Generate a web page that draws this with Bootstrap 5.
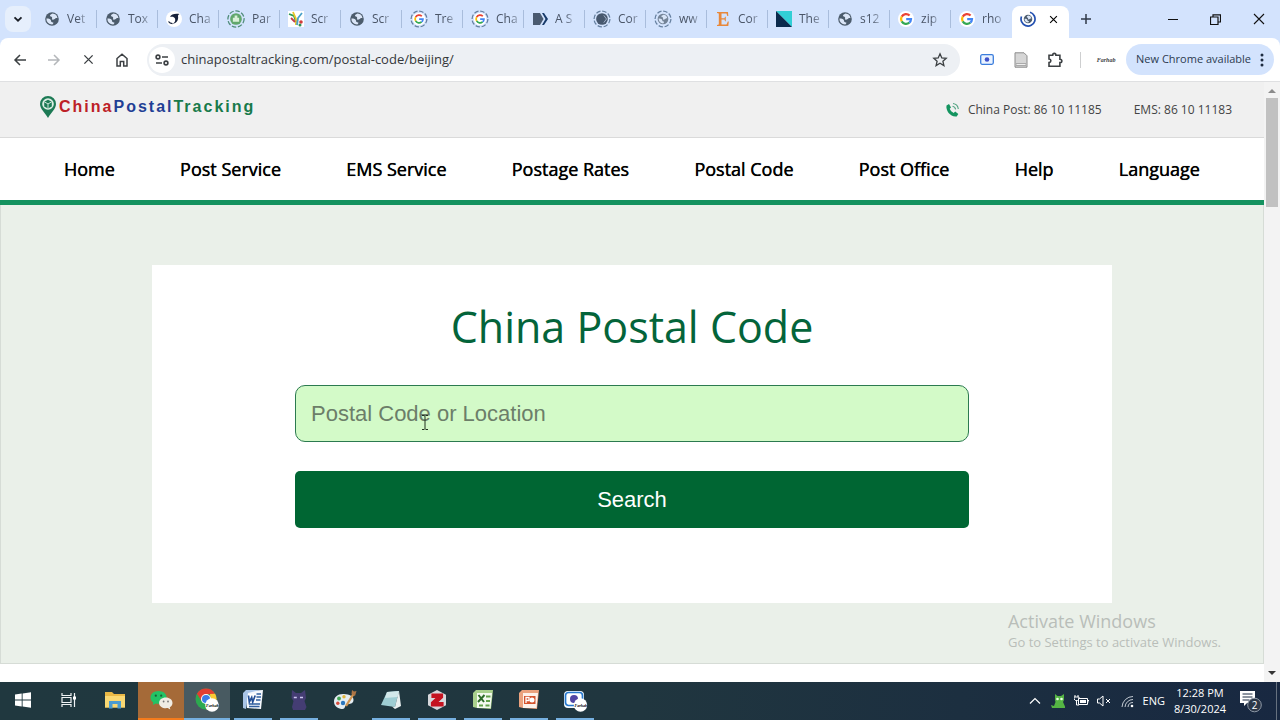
<!DOCTYPE html>
<html lang="en">
<head>
<meta charset="utf-8">
<meta name="viewport" content="width=device-width, initial-scale=1">
<title>China Postal Code</title>
<link href="https://cdn.jsdelivr.net/npm/bootstrap@5.3.0/dist/css/bootstrap.min.css" rel="stylesheet">
<style>
  :root { --ui: "Open Sans", "Noto Sans", sans-serif; --arial: "Liberation Sans", Arial, sans-serif; }
  body { font-family: var(--ui); color: #000; background: #fff; }
  svg { display: block; flex: none; }
  button { font-family: inherit; }
  .plain-btn { border: 0; background: none; padding: 0; color: inherit; display: flex; align-items: center; justify-content: center; }

  /* browser tabs */
  header { background: #d3e3fd; }
  .tab-strip { height: 38px; }
  .tab-search { width: 26px; height: 26px; border-radius: 8px; background: #e6effc; margin: 0 5px 0 5px; }
  .site-tab { width: 61px; height: 18px; border-right: 1px solid #a9bddc; padding-left: 8px; gap: 7px; font-size: 12px; line-height: 18px; color: #4a5567; justify-content: flex-start; }
  .site-tab.last-tab { border-right-color: transparent; }
  .tab-name { white-space: nowrap; -webkit-mask-image: linear-gradient(90deg, #000 60%, #0006); mask-image: linear-gradient(90deg, #000 60%, #0006); }
  .current-tab { width: 57px; height: 32px; background: #fff; border-radius: 8px 8px 0 0; gap: 13px; padding: 0 3px 6px 0; }
  .win-btn { width: 43px; height: 38px; }

  /* toolbar */
  .tool-bar { height: 44px; background: #fff; border-bottom: 1px solid #dfe0e2; border-radius: 8px 8px 0 0; color: #3c4043; padding: 0 6px 0 3px; }
  .nav-btn { width: 34px; height: 34px; }
  .address { height: 32px; border-radius: 16px; background: #edf0f4; padding: 0 12px 0 2px; margin: 0 10px 0 8px; }
  .site-info { width: 26px; height: 26px; border-radius: 50%; background: #fff; }
  .address input { border: 0; background: none; outline: 0; font-size: 13px; color: #33363a; padding: 0 0 0 6px; min-width: 0; }
  .tool-rule { height: 16px; margin: 0 14px 0 8px; }
  .profile-name { font: italic bold 6px "Liberation Serif", serif; width: 22px; margin-right: 9px; }
  .update-btn { height: 31px; border-radius: 16px; background: #d3e3fd; font-size: 11px; color: #2d3b50; padding: 0 10px; gap: 9px; white-space: nowrap; }

  /* page */
  .contact-bar { background: #f0f0f0; border-bottom: 1px solid #dadada; padding: 0 32px 5px 40px; height: 56px; }
  .word-mark { font: bold 16px/20px var(--arial); letter-spacing: 2px; text-decoration: none; gap: 3px; }
  .phones { font-size: 12px; color: #444; padding-top: 6px; }
  .main-menu { height: 67px; padding: 0 64px; border-bottom: 5px solid #14925f; }
  .main-menu a { color: #000; text-decoration: none; font-size: 18px; text-shadow: 0 0 0 #000, 0 0 1px #0006; white-space: nowrap; }
  .hero { background: #eaf0e9; border: 1px solid #d6dcd6; border-top: 0; padding: 60px 0; }
  .search-panel { width: 76%; background: #fff; padding: 34px 0 75px; }
  .search-panel form { width: 674px; max-width: 90%; }
  .search-panel h1 { font-size: 43px; line-height: 56px; font-weight: 400; color: #04643a; margin: 0 0 30px; }
  .code-box { height: 57px; border: 1px solid #2c7a50; border-radius: 10px; background: #d3fac8; font: 22px var(--arial); padding: 0 15px; color: #333; }
  .code-box::placeholder { color: #6c7e69; opacity: 1; }
  .code-box:focus { background: #d3fac8; border-color: #2c7a50; box-shadow: none; }
  .find-btn { height: 57px; border: 0; border-radius: 5px; background: #006633; color: #fff; font: 22px var(--arial); margin-top: 29px; }
  .pointer { left: 421px; top: 414px; }
  .watermark { right: 59px; bottom: 69px; color: #b9beb9; white-space: nowrap; }
  .watermark div:first-child { font-size: 18px; line-height: 23px; }
  .watermark div:last-child { font-size: 13px; line-height: 18px; }

  /* scroll bar */
  .scroll-rail { width: 16px; background: #f3f3f3; padding: 6px 0; }
  .scroll-thumb { width: 12px; height: 109px; background: #c1c1c1; margin-top: 4px; }

  /* task bar */
  .task-bar { height: 38px; background: linear-gradient(90deg, #20383f, #20363f 50%, #182841); color: #fff; }
  .task-btn { width: 46px; height: 38px; border-bottom: 2px solid transparent; }
  .running { background: linear-gradient(#76b0e0, #76b0e0) center bottom / 38px 2px no-repeat border-box; }
  .alerting { background: #a56a38; border-bottom-color: #f47b1c; }
  .focused { background: #485a61; border-bottom-color: #76b0e0; }
  .tray { font-size: 11px; line-height: 16px; }
  .tray-icon { width: 23px; height: 38px; }
  .clock { width: 62px; text-align: center; }
  .notices { margin: 0 11px 0 8px; }
  .show-desktop { width: 4px; height: 38px; border-left: 1px solid #66717f; }
</style>
</head>
<body class="d-flex flex-column min-vh-100">

<svg width="0" height="0" class="position-absolute" aria-hidden="true">
  <symbol id="globe" viewBox="0 0 16 16"><circle cx="8" cy="8" r="6.800" fill="#4c5c6c"/><path d="M8.500 2.500c-1 .8-2.700.8-2.500 2.300.1 1 1.500.7 2 1.500.5.900-.4 1.500.3 2.200.8.800 2.200-.2 3-.9.6-.5 1.200-.6 2.200-.4A5.500 5.500 0 0 0 8.500 2.500zM2.400 7.500c1.400-.1 2.800-.1 4 .9 1 .8.300 1.800 1.200 2.500.8.600 1.900.2 1.800 1-.1.700-.7 1.200-1.200 1.700A5.700 5.700 0 0 1 2.400 7.500z" fill="#dbe6f7"/></symbol>
  <symbol id="gee" viewBox="0 0 16 16"><circle cx="8" cy="8" r="8" fill="#fff"/><g fill="none" stroke-width="2.200"><path d="M11.600 4.500A5 5 0 0 0 3.700 5.600" stroke="#ea4335"/><path d="M3.700 5.600a5 5 0 0 0 0 4.800" stroke="#fbbc05"/><path d="M3.700 10.400a5 5 0 0 0 7.600 1.300" stroke="#34a853"/><path d="M11.300 11.700A4.800 4.800 0 0 0 13 8.200H8.200" stroke="#4285f4"/></g></symbol>
  <symbol id="dashes" viewBox="0 0 20 20"><circle cx="10" cy="10" r="8.800" fill="none" stroke="#6680a0" stroke-width="1.400" stroke-dasharray="5 1.900"/></symbol>
  <symbol id="blocks" viewBox="0 0 16 16"><path d="M1 2h7l3.500 6L8 14H1z" fill="#4a5a70"/><path d="M10 2h2l4 6-4 6h-2l3.500-6z" fill="#173a6a"/></symbol>
  <symbol id="cross" viewBox="0 0 12 12"><path d="M1.500 1.500l9 9M10.500 1.500l-9 9" stroke="currentColor" stroke-width="1.500" fill="none"/></symbol>
</svg>

<header>
  <div class="tab-strip d-flex align-items-center">
    <button class="plain-btn tab-search" aria-label="Search tabs"><svg width="10" height="10" viewBox="0 0 10 10"><path d="M1.500 3.300L5 6.700l3.500-3.400" fill="none" stroke="#1b1f26" stroke-width="1.800"/></svg></button>
    <button class="plain-btn site-tab"><svg width="16" height="16"><use href="#globe"/></svg><span class="tab-name">Vet</span></button>
    <button class="plain-btn site-tab"><svg width="16" height="16"><use href="#globe"/></svg><span class="tab-name">Tox</span></button>
    <button class="plain-btn site-tab"><svg width="16" height="16" viewBox="0 0 16 16"><circle cx="8" cy="8" r="8" fill="#fff"/><path d="M4 6C5 3 9 2.500 13.500 3c-1 .5-1.300 1-1.500 2 .8 4-1.500 7.500-5.500 7.800C9 11.500 9.700 9.500 9 7.500 8 5.500 6 5.500 4 6z" fill="#16213a"/><path d="M2.500 10.500c1 1.500 2 2 4 2.200" fill="none" stroke="#16213a" stroke-width="1.300"/></svg><span class="tab-name">Cha</span></button>
    <button class="plain-btn site-tab"><svg width="18" height="18" viewBox="0 0 20 20"><circle cx="10" cy="10" r="6.500" fill="#61a76c"/><path d="M6.500 13V8.500h2V6h3v2.500h2V13z" fill="#d9f0d8"/><circle cx="10" cy="10" r="9" fill="none" stroke="#4d8a78" stroke-width="1.400" stroke-dasharray="5 1.900"/></svg><span class="tab-name">Par</span></button>
    <button class="plain-btn site-tab"><svg width="16" height="16" viewBox="0 0 16 16"><path fill="#fff" d="M0 0h16v16H0z"/><g fill="none" stroke-width="1.800"><path d="M1 3l5 2 2 6" stroke="#2d9a57"/><path d="M5 1l3 7v6" stroke="#e8c526"/><path d="M14 2l-4 5-1 7" stroke="#49a1c9"/><path d="M3 7l4 4" stroke="#c03c4c"/></g><circle cx="13" cy="11" r="1.800" fill="#d23b3b"/><circle cx="12" cy="14" r="1.500" fill="#2f8f55"/></svg><span class="tab-name">Scr</span></button>
    <button class="plain-btn site-tab"><svg width="16" height="16"><use href="#globe"/></svg><span class="tab-name">Scr</span></button>
    <button class="plain-btn site-tab"><svg width="18" height="18" viewBox="0 0 20 20"><use href="#gee" x="3" y="3" width="14" height="14"/><use href="#dashes"/></svg><span class="tab-name">Tre</span></button>
    <button class="plain-btn site-tab"><svg width="18" height="18" viewBox="0 0 20 20"><use href="#gee" x="3" y="3" width="14" height="14"/><use href="#dashes"/></svg><span class="tab-name">Cha</span></button>
    <button class="plain-btn site-tab"><svg width="16" height="16"><use href="#blocks"/></svg><span class="tab-name">A S</span></button>
    <button class="plain-btn site-tab"><svg width="18" height="18" viewBox="0 0 20 20"><circle cx="10" cy="10" r="6.500" fill="#47586e"/><path d="M12 6l3 4-3 4" fill="none" stroke="#a9bad2"/><use href="#dashes"/></svg><span class="tab-name">Cor</span></button>
    <button class="plain-btn site-tab"><svg width="18" height="18" viewBox="0 0 20 20"><use href="#globe" x="3" y="3" width="14" height="14" opacity=".7"/><use href="#dashes"/></svg><span class="tab-name">ww</span></button>
    <button class="plain-btn site-tab"><svg width="16" height="16" viewBox="0 0 16 16"><path d="M2 1h11l.3 4h-1l-.8-2.500H6.500v4.800h3l.5-1.500h.8v4.400H10l-.5-1.600h-3v4.900h5l1.300-3h1L13.300 15H2v-1l1.800-.4V2.400L2 2z" fill="#e8883a"/></svg><span class="tab-name">Cor</span></button>
    <button class="plain-btn site-tab"><svg width="16" height="16" viewBox="0 0 16 16"><path fill="#31cfd6" d="M0 0h16v16z"/><path fill="#0b2a4c" d="M0 0v16h16z"/></svg><span class="tab-name">The</span></button>
    <button class="plain-btn site-tab"><svg width="16" height="16"><use href="#globe"/></svg><span class="tab-name">s12</span></button>
    <button class="plain-btn site-tab"><svg width="16" height="16"><use href="#gee"/></svg><span class="tab-name">zip</span></button>
    <button class="plain-btn site-tab last-tab"><svg width="16" height="16"><use href="#gee"/></svg><span class="tab-name">rho</span></button>
    <div class="current-tab d-flex align-items-center justify-content-center align-self-end">
      <svg width="16" height="16" viewBox="0 0 16 16"><use href="#globe" x="3" y="3" width="10" height="10"/><path d="M10 1.300a7 7 0 1 1-8.500 4.200" fill="none" stroke="#2350b0" stroke-width="1.700"/></svg>
      <button class="plain-btn" aria-label="Close tab"><svg width="9" height="9"><use href="#cross"/></svg></button>
    </div>
    <button class="plain-btn nav-btn" aria-label="New tab"><svg width="12" height="12" viewBox="0 0 12 12"><path d="M6 1v10M1 6h10" stroke="#303a48" stroke-width="1.500"/></svg></button>
    <div class="d-flex ms-auto">
      <button class="plain-btn win-btn" aria-label="Minimize"><svg width="10" height="10" viewBox="0 0 10 10"><path d="M0 5.500h10" stroke="#111"/></svg></button>
      <button class="plain-btn win-btn" aria-label="Restore"><svg width="11" height="11" viewBox="0 0 11 11"><path d="M.5 3h7.500v7.500H.5zM3 3V.8h7.500V8H8" fill="none" stroke="#111" stroke-width="1.200"/></svg></button>
      <button class="plain-btn win-btn" aria-label="Close window"><svg width="12" height="12" viewBox="0 0 12 12"><path d="M1 1l10 10M11 1L1 11" stroke="#111" stroke-width="1.100"/></svg></button>
    </div>
  </div>

  <div class="tool-bar d-flex align-items-center">
    <button class="plain-btn nav-btn" aria-label="Back"><svg width="14" height="14" viewBox="0 0 14 14"><path d="M13 7H2M7 2L2 7l5 5" fill="none" stroke="#3c4043" stroke-width="1.500"/></svg></button>
    <button class="plain-btn nav-btn" aria-label="Forward"><svg width="14" height="14" viewBox="0 0 14 14"><path d="M1 7h11M7 2l5 5-5 5" fill="none" stroke="#b4b7ba" stroke-width="1.500"/></svg></button>
    <button class="plain-btn nav-btn" aria-label="Stop"><svg width="11" height="11"><use href="#cross"/></svg></button>
    <button class="plain-btn nav-btn" aria-label="Home"><svg width="14" height="14" viewBox="0 0 14 14"><path d="M2 13V5.500L7 1.200l5 4.300V13H8.700V8.500H5.300V13z" fill="none" stroke="#3c4043" stroke-width="1.500"/></svg></button>
    <div class="address d-flex align-items-center flex-grow-1">
      <button class="plain-btn site-info" aria-label="Site information"><svg width="14" height="12" viewBox="0 0 14 12"><g fill="none" stroke="#3c4043" stroke-width="1.600"><circle cx="3" cy="3" r="1.900"/><path d="M7 3h6M1 9h6"/><circle cx="11" cy="9" r="1.900"/></g></svg></button>
      <input class="flex-grow-1" type="text" aria-label="Address" value="chinapostaltracking.com/postal-code/beijing/">
      <button class="plain-btn" aria-label="Bookmark"><svg width="16" height="16" viewBox="0 0 16 16"><path d="M8 1.800l1.800 4.100 4.400.4-3.300 2.900 1 4.400L8 11.300l-3.900 2.300 1-4.400-3.300-2.900 4.400-.4z" fill="none" stroke="#3c4043" stroke-width="1.300"/></svg></button>
    </div>
    <button class="plain-btn nav-btn" aria-label="Screen recorder"><svg width="14" height="11" viewBox="0 0 14 11"><rect x=".7" y=".7" width="12.600" height="9.600" rx="1.500" fill="#eaf3ff" stroke="#3b7ddc" stroke-width="1.300"/><circle cx="7" cy="5.500" r="2.300" fill="#3f51c9"/></svg></button>
    <button class="plain-btn nav-btn" aria-label="Page saver"><svg width="14" height="16" viewBox="0 0 14 16"><path d="M1 .8h9l3 3v11.400H1z" fill="#d6d6d6" stroke="#8c8c8c"/><path d="M2 11h10v3H2z" fill="#aaa"/><path d="M2.500 12.500h9" stroke="#eee"/></svg></button>
    <button class="plain-btn nav-btn" aria-label="Extensions"><svg width="17" height="16" viewBox="0 0 17 16"><path d="M2 3.200h3.700c0-2.500 3.200-2.500 3.200 0h4v4c2.600 0 2.600 3.400 0 3.400v3.600H2v-3.600c2.500-.2 2.500-3.400 0-3.600z" fill="none" stroke="#3c4043" stroke-width="1.600"/></svg></button>
    <div class="vr tool-rule my-auto"></div>
    <button class="plain-btn profile-name">Farhab</button>
    <button class="plain-btn update-btn">New Chrome available<svg width="4" height="14" viewBox="0 0 4 14"><g fill="#1d2b40"><circle cx="2" cy="2" r="1.500"/><circle cx="2" cy="7" r="1.500"/><circle cx="2" cy="12" r="1.500"/></g></svg></button>
  </div>
</header>

<div class="d-flex flex-grow-1">
  <main class="flex-grow-1">
    <div class="contact-bar d-flex align-items-center justify-content-between">
      <a href="#" class="word-mark d-flex align-items-center"><svg width="16" height="22" viewBox="0 0 16 22"><path d="M8 0a8 8 0 0 1 8 8c0 5-5 8.500-8 14C5 16.500 0 13 0 8a8 8 0 0 1 8-8z" fill="#1d7a55"/><circle cx="8" cy="8" r="5.800" fill="#dceee4"/><path d="M8 3.800l3.800 2v4.600L8 12.500l-3.800-2.100V5.800z" fill="#1d7a55"/><path d="M4.200 5.800L8 7.900l3.800-2.100M8 7.900v4.600" fill="none" stroke="#dceee4" stroke-width=".9"/></svg><span><span style="color:#bd2027">China</span><span style="color:#1f3f95">Postal</span><span style="color:#187a4b">Tracking</span></span></a>
      <div class="phones d-flex align-items-center">
        <svg width="15" height="16" viewBox="0 0 15 16"><path d="M1.500 3.500L4 2l2 3.500-1.300 1.300c.8 2 2 3.200 4 4.100L10.200 9.600l3.100 2.300-1.600 2.500C6 15.500.5 9 1.500 3.500z" fill="#13945f"/><path d="M7.500 4.200c1.800.3 2.800 1.400 3.100 3.200M8 1.500c3 .4 4.900 2.300 5.300 5.500" fill="none" stroke="#4fa27f" stroke-width="1.100"/></svg>
        <span class="ms-2">China Post: 86 10 11185</span>
        <span class="ms-4 ps-2">EMS: 86 10 11183</span>
      </div>
    </div>
    <nav class="main-menu d-flex align-items-center justify-content-between">
      <a href="#">Home</a><a href="#">Post Service</a><a href="#">EMS Service</a><a href="#">Postage Rates</a><a href="#">Postal Code</a><a href="#">Post Office</a><a href="#">Help</a><a href="#">Language</a>
    </nav>
    <section class="hero">
      <div class="search-panel mx-auto">
        <form class="mx-auto">
          <h1 class="text-center">China Postal Code</h1>
          <input class="form-control code-box" type="text" placeholder="Postal Code or Location" aria-label="Postal Code or Location">
          <button type="button" class="btn w-100 find-btn">Search</button>
        </form>
      </div>
    </section>
  </main>
  <div class="scroll-rail d-flex flex-column align-items-center" aria-hidden="true">
    <svg width="8" height="6" viewBox="0 0 8 6"><path d="M4 1l4 4H0z" fill="#8b8b8b"/></svg>
    <div class="scroll-thumb"></div>
    <svg class="mt-auto" width="8" height="6" viewBox="0 0 8 6"><path d="M4 5l4-4H0z" fill="#333"/></svg>
  </div>
</div>

<svg class="pointer position-absolute" width="8" height="17" viewBox="0 0 8 17" aria-hidden="true"><path d="M1 1.500h2.200L4 2.300l.8-.8H7M4 2.300v12.400M1 15.500h2.200l.8-.8.8.8H7" fill="none" stroke="#20301f"/></svg>
<div class="watermark position-absolute"><div>Activate Windows</div><div>Go to Settings to activate Windows.</div></div>

<footer class="task-bar d-flex align-items-center">
  <button class="plain-btn task-btn" aria-label="Start"><svg width="16" height="16" viewBox="0 0 16 16"><path d="M0 2.400L6.700 1.500v6H0zM7.600 1.400L16 .2v7.300H7.600zM0 8.400h6.700v6L0 13.500zM7.600 8.400H16v7.400l-8.400-1.200z" fill="#fff"/></svg></button>
  <button class="plain-btn task-btn" aria-label="Task view"><svg width="16" height="16" viewBox="0 0 16 16"><path d="M1 1v2.500h9V1M1 15v-2.500h9V15M1 5.500h9v5H1zM13.500 1v14" fill="none" stroke="#eef2f4" stroke-width="1.200"/><path d="M12 4.500h3v3h-3z" fill="#fff"/></svg></button>
  <button class="plain-btn task-btn" aria-label="File Explorer"><svg width="20" height="18" viewBox="0 0 20 18"><path d="M0 1h7l2 2h11v13.500H0z" fill="#e9b846"/><path d="M0 5h20v11.500H0z" fill="#f9d873"/><path d="M4 17.500V10h12v7.500h-3.500V13h-5v4.500z" fill="#4a9bd0"/></svg></button>
  <button class="plain-btn task-btn alerting" aria-label="WeChat"><svg width="23" height="20" viewBox="0 0 23 20"><path d="M8.500 1C4 1 .5 3.800.5 7.500c0 2 1 3.700 2.800 4.900L2.800 15l3-1.500c5.700 1.200 10.800-1.400 10.800-6C16.600 3.800 13 1 8.500 1z" fill="#22c365"/><path d="M15.800 7.500c-3.900 0-6.700 2.300-6.700 5.400 0 3.600 4 6 8.600 5.200l2.600 1.400-.5-2.300c1.700-1 2.700-2.500 2.700-4.300 0-3.100-2.900-5.400-6.700-5.400z" fill="#f0ece3"/><circle cx="5.800" cy="5.700" r="1.100" fill="#195f36"/><circle cx="11.200" cy="5.700" r="1.100" fill="#195f36"/><circle cx="13.600" cy="11.500" r=".9" fill="#777"/><circle cx="18" cy="11.500" r=".9" fill="#777"/></svg></button>
  <button class="plain-btn task-btn focused" aria-label="Chrome"><svg width="24" height="24" viewBox="0 0 24 24"><circle cx="11" cy="11" r="10.500" fill="#2da94f"/><path d="M1.900 5.700A10.500 10.500 0 0 1 20.100 5.700L11 6.500 6.500 13z" fill="#e23e32"/><path d="M20.100 5.700A10.500 10.500 0 0 1 11 21.500L15.800 13 15 6.100z" fill="#fcc934"/><circle cx="11" cy="11" r="5" fill="#fff"/><circle cx="11" cy="11" r="4" fill="#3c7ce6"/><circle cx="17" cy="17" r="6.800" fill="#fff"/><text x="11" y="19" font-family="Liberation Serif, serif" font-style="italic" font-weight="bold" font-size="4">Farhab</text></svg></button>
  <button class="plain-btn task-btn running" aria-label="Word"><svg width="22" height="22" viewBox="0 0 22 22"><path d="M3 2l18-1-2 19-14-1z" fill="#f4f8fd"/><path d="M1 4l3-3h14L6 4 4 20l-3-1z" fill="#a9c5e8"/><path d="M6 5h8v9H5z" fill="#fff"/><path d="M6.500 6.500L7.300 13l2.400-4.500 1 4.500 2.500-6.500" fill="none" stroke="#234f96" stroke-width="1.700"/><path d="M14.500 5h4.500M14.500 8H19M14 11h4.500M7 15h11M7 17.500h10.500" stroke="#315f9f" stroke-width="1.300"/></svg></button>
  <button class="plain-btn task-btn running" aria-label="Cat"><svg width="20" height="22" viewBox="0 0 20 22"><path d="M3 1l4 3h5l4-3 1 8-1.500 3 2 6L16 21H4l-1-3 1.500-6L2.500 9z" fill="#443d73"/><path d="M4.800 8.500h3M11 8.500h3" stroke="#cbc6ef" stroke-width="1.500"/></svg></button>
  <button class="plain-btn task-btn" aria-label="Paint"><svg width="24" height="22" viewBox="0 0 24 22"><path d="M11 5C5 4.500 1 8 1 12.500 1 18 6 20 9.500 20c3 0 2-3.500 4.500-4.500s6.500-.5 6.500-4.500S16.500 5.400 11 5z" fill="#e4edf2"/><circle cx="6" cy="9.500" r="1.900" fill="#43a655"/><circle cx="11" cy="7.800" r="1.700" fill="#e2b53a"/><circle cx="4.800" cy="14.200" r="1.700" fill="#d74c3d"/><circle cx="10" cy="14" r="2.200" fill="#2c76bd"/><path d="M20.500 5L13 17" stroke="#d09552" stroke-width="2.300"/><path d="M18.500 5L19 1l2 1.500L23.500 2l-1.500 5z" fill="#ad7545"/></svg></button>
  <button class="plain-btn task-btn running" aria-label="Notepad"><svg width="22" height="20" viewBox="0 0 22 20"><path d="M7 2l12-1-4 16L1 15z" fill="#9ecdd3"/><path d="M7 2l12-1-1.500 6-12.500 1z" fill="#d2e8ea"/><path d="M19 1l2 15-6 3-3-2.500 3 .5z" fill="#e9f0f0"/></svg></button>
  <button class="plain-btn task-btn running" aria-label="Zotero"><svg width="20" height="22" viewBox="0 0 20 22"><path d="M10 1l9 4.700v10.600L10 21l-9-4.700V5.700z" fill="#d7d8dc"/><path d="M5 5h10.500v3.500L10 13.500h6V17H4.500v-3.500L10 8.500H5z" fill="#c41320" stroke="#c41320" stroke-width="1.200"/></svg></button>
  <button class="plain-btn task-btn running" aria-label="Excel"><svg width="22" height="22" viewBox="0 0 22 22"><path d="M1 4l3-3h17l-2 19-14-1-4-1z" fill="#a9d08d"/><path d="M5 4h15l-1.500 15H5z" fill="#f4faef"/><path d="M6.500 6l5.500 7M12.500 6L6 13" stroke="#2c6b28" stroke-width="2"/><path d="M14 6.500h4.500v2H14zM14 11h4v2h-4zM7 15.500h4v2H7zM13.500 15.500h4v2h-4z" fill="#62a14b"/></svg></button>
  <button class="plain-btn task-btn running" aria-label="PowerPoint"><svg width="22" height="22" viewBox="0 0 22 22"><path d="M1 4l3-3h17l-2 19-14-1-4-1z" fill="#eba27e"/><path d="M5 4h15l-1.500 15H5z" fill="#fdf1ea"/><path d="M6 7h11.500v8H6z" fill="#d5522c"/><circle cx="14" cy="11" r="2.500" fill="#fff"/><path d="M8 14V8.500h3v3H8" fill="none" stroke="#fff" stroke-width="1.300"/></svg></button>
  <button class="plain-btn task-btn running" aria-label="Camera"><svg width="25" height="23" viewBox="0 0 25 23"><rect x="1" y="2" width="20" height="17" rx="4" fill="#f5faff"/><rect x="2.500" y="3.500" width="17" height="13" rx="3" fill="#fff" stroke="#2678ce" stroke-width="1.700"/><circle cx="11" cy="10" r="4" fill="#5146a4"/><circle cx="17.500" cy="16" r="6.700" fill="#fff"/><text x="11.500" y="17.500" font-family="Liberation Serif, serif" font-style="italic" font-weight="bold" font-size="4">Farhab</text></svg></button>

  <div class="tray d-flex align-items-center ms-auto">
    <button class="plain-btn tray-icon" aria-label="Show hidden icons"><svg width="12" height="8" viewBox="0 0 12 8"><path d="M1 6.500l5-5 5 5" fill="none" stroke="#fff" stroke-width="1.200"/></svg></button>
    <button class="plain-btn tray-icon" aria-label="Cat"><svg width="15" height="14" viewBox="0 0 15 14"><path d="M4 0l2.500 2H10L13 0v6l-1 2 2 4.500V14H1l-1-3 3 1 1.500-4L4 6z" fill="#55b544"/><circle cx="6.500" cy="5" r="1.300" fill="#e8ffe2"/><circle cx="10.500" cy="5" r="1.300" fill="#e8ffe2"/></svg></button>
    <button class="plain-btn tray-icon" aria-label="Battery"><svg width="15" height="12" viewBox="0 0 15 12"><path d="M4.500 3.500h9v6h-9zM13.500 5.500H15v2" fill="none" stroke="#fff"/><path d="M6 5h6v3H6z" fill="#fff"/><path d="M1 0v2M4 0v2M0 2h5v2L3.500 5.500h-2L0 4zM2.500 5.500V10H5" fill="none" stroke="#fff"/></svg></button>
    <button class="plain-btn tray-icon" aria-label="Muted"><svg width="14" height="12" viewBox="0 0 14 12"><path d="M.5 4h2L6 1v10L2.500 8h-2zM9 4l4 4M13 4L9 8" fill="none" stroke="#fff"/></svg></button>
    <button class="plain-btn tray-icon" aria-label="Wireless network"><svg width="13" height="13" viewBox="0 0 13 13"><g fill="none" stroke="#c4cbd3"><path d="M1 12A11 11 0 0 1 12 1.500M4 12a8 8 0 0 1 8-7.500M7 12a5 5 0 0 1 5-4.500"/></g><circle cx="11" cy="11" r="1.300" fill="#fff"/></svg></button>
    <button class="plain-btn px-1">ENG</button>
    <div class="clock">12:28 PM<br>8/30/2024</div>
    <button class="plain-btn notices" aria-label="2 new notifications"><svg width="26" height="24" viewBox="0 0 26 24"><path d="M1 2h15v12H8l-3 3v-3H1z" fill="#fff"/><path d="M3.500 5h10M3.500 8h10M3.500 11h7" stroke="#182841"/><circle cx="15.500" cy="16" r="6.800" fill="#2c3748" stroke="#8d98a6"/><text x="12.800" y="20" font-size="10" fill="#fff" font-family="Open Sans, sans-serif">2</text></svg></button>
    <div class="show-desktop"></div>
  </div>
</footer>

<script src="https://cdn.jsdelivr.net/npm/bootstrap@5.3.0/dist/js/bootstrap.bundle.min.js"></script>
</body>
</html>
